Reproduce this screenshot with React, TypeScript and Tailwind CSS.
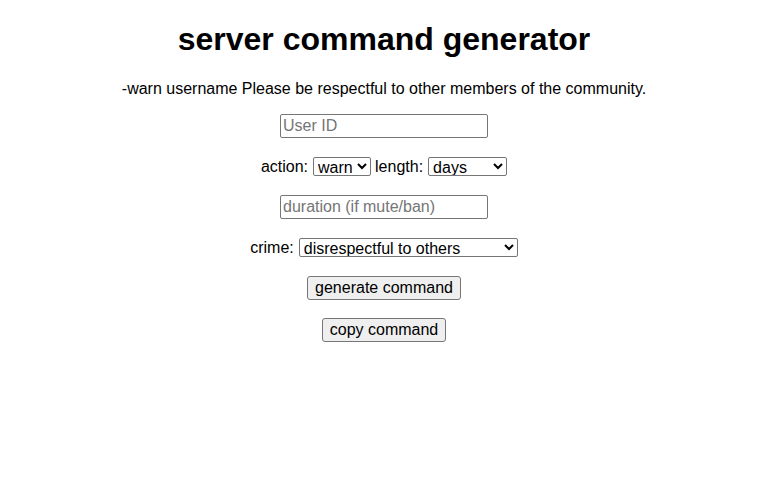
import React from "react";

export default function App() {
  return (
    <div className="min-h-screen bg-white text-black text-center text-[16px]" style={{ fontFamily: '"Liberation Sans", Arial, sans-serif' }}>
      <div className="flex flex-col items-center">
        <h1 className="text-[32px] font-bold leading-[37px] mt-[21px]">server command generator</h1>
        <p className="leading-[18px] mt-[22px]">-warn username Please be respectful to other members of the community.</p>
        <input
          type="text"
          placeholder="User ID"
          className="mt-[16px] w-[208px] h-[24px] border border-[#767676] rounded-[2px] px-[2px] leading-[20px] placeholder:text-[#757575] outline-none"
        />
        <div className="mt-[17px] flex items-center h-[23px] leading-[18px]">
          <span>action:</span>
          <select defaultValue="warn" className="ml-[5px] w-[58px] h-[19px] border border-[#767676] rounded-[2px] bg-white text-[16px] leading-[17px]">
            <option value="warn">warn</option>
            <option value="mute">mute</option>
            <option value="ban">ban</option>
          </select>
          <span className="ml-[4px]">length:</span>
          <select defaultValue="days" className="ml-[5px] w-[79px] h-[19px] border border-[#767676] rounded-[2px] bg-white text-[16px] leading-[17px]">
            <option value="minutes">minutes</option>
            <option value="hours">hours</option>
            <option value="days">days</option>
          </select>
        </div>
        <input
          type="text"
          placeholder="duration (if mute/ban)"
          className="mt-[17px] w-[208px] h-[24px] border border-[#767676] rounded-[2px] px-[2px] leading-[20px] placeholder:text-[#757575] outline-none"
        />
        <div className="mt-[17px] flex items-center h-[23px] leading-[18px]">
          <span>crime:</span>
          <select defaultValue="d" className="ml-[5px] w-[219px] h-[19px] border border-[#767676] rounded-[2px] bg-white text-[16px] leading-[17px]">
            <option value="d">disrespectful to others</option>
            <option value="s">spamming</option>
          </select>
        </div>
        <button className="mt-[17px] w-[154px] h-[24px] border border-[#767676] rounded-[3px] bg-[#efefef] leading-[20px]">generate command</button>
        <button className="mt-[18px] w-[124px] h-[24px] border border-[#767676] rounded-[3px] bg-[#efefef] leading-[20px]">copy command</button>
      </div>
    </div>
  );
}
